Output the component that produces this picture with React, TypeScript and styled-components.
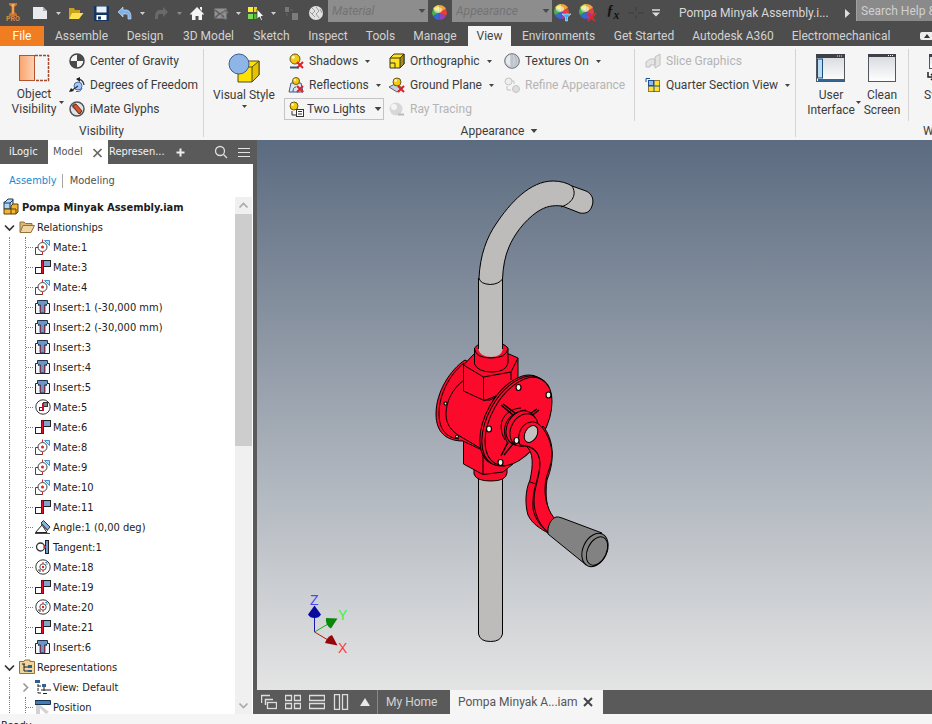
import React from "react";
import styled, { createGlobalStyle, css } from "styled-components";

const Global = createGlobalStyle`
  *, *::before, *::after { box-sizing: border-box; }
  html, body { margin: 0; background: #f5f5f5; }
  button, select, input { font: inherit; color: inherit; margin: 0; }
  ul { list-style: none; margin: 0; padding: 0; }
  svg { display: block; flex: none; }
`;

const uiFont = `Roboto, "Open Sans", sans-serif`;
const treeFont = `"DejaVu Sans Condensed", "DejaVu Sans", sans-serif`;

const Shell = styled.div`
  display: flex;
  flex-direction: column;
  height: 100vh;
  overflow: hidden;
  font: 12px/16px ${uiFont};
  color: #3c3c3c;
`;

const plain = css`
  background: none;
  border: 0;
  padding: 0;
  white-space: nowrap;
`;

/* ---------- quick access bar ---------- */

const QuickBar = styled.header`
  display: grid;
  flex: none;
  grid-template-columns:
    26px 28px 9px 26px 24px 24px 10px 28px 8px 28px 20px 14px 22px 12px 24px
    25px 100px 24px 100px 22px 28px 22px 24px 16px 176px 16px minmax(76px, 1fr);
  align-items: center;
  height: 26px;
  background: #4d4d4d;
  color: #d8d8d8;
`;

const QuickButton = styled.button`
  ${plain}
  display: flex;
  align-items: center;
  justify-content: center;
  height: 22px;
`;

const LogoBox = styled.div`
  display: flex;
  flex-direction: column;
  align-items: center;
  color: #e0893a;
  font: bold 7px/7px ${uiFont};
`;

const ComboBox = styled.span`
  display: grid;
  align-self: start;
  align-items: center;
  height: 22px;
  background: #8d8d8d;
  color: #737373;
  font-style: italic;
  > * { grid-area: 1 / 1; }
  > svg { justify-self: end; margin-right: 2px; pointer-events: none; }
`;

const ComboSelect = styled.select`
  ${plain}
  appearance: none;
  width: 100%;
  height: 100%;
  padding-left: 4px;
  opacity: 1;
`;

const WindowTitle = styled.div`
  padding-left: 15px;
  white-space: nowrap;
`;

const SearchInput = styled.input`
  align-self: start;
  width: 100%;
  height: 21px;
  border: 0;
  border-left: 1px solid #a0a0a0;
  padding: 0 0 0 4px;
  background: #8a8a8a;
  &::placeholder { color: #d0d0d0; opacity: 1; }
`;

/* ---------- ribbon ---------- */

const TabBar = styled.nav`
  display: flex;
  flex: none;
  height: 20px;
  background: #4d4d4d;
`;

const RibbonTab = styled.button<{ $w: number; $kind?: "file" | "active" }>`
  ${plain}
  display: flex;
  flex: none;
  align-items: center;
  justify-content: center;
  width: ${(p) => p.$w}px;
  color: ${(p) => (p.$kind === "file" ? "#fff" : p.$kind === "active" ? "#444" : "#d2d2d2")};
  background: ${(p) => (p.$kind === "file" ? "#f07d22" : p.$kind === "active" ? "#f5f5f5" : "none")};
`;

const CollapseButton = styled.button`
  ${plain}
  display: flex;
  align-items: center;
  justify-content: center;
  flex: none;
  align-self: center;
  width: 14px;
  height: 8px;
  margin-left: 22px;
  border-radius: 2px;
  background: #eee;
`;

const Ribbon = styled.section`
  display: flex;
  flex: none;
  height: 94px;
  padding-top: 3px;
  background: #f5f5f5;
  overflow: hidden;
`;

const Panel = styled.div<{ $w: number }>`
  display: flex;
  flex-direction: column;
  flex: none;
  width: ${(p) => p.$w}px;
  height: 88px;
  border-right: 1px solid #d4d4d4;
`;

const PanelBody = styled.div<{ $pad?: number }>`
  display: flex;
  flex: none;
  height: 72px;
  padding-left: ${(p) => p.$pad ?? 0}px;
`;

const PanelLabel = styled.button`
  ${plain}
  display: flex;
  flex: none;
  align-items: center;
  justify-content: center;
  gap: 6px;
  height: 20px;
`;

const ToolColumn = styled.div<{ $w: number; $lead?: number }>`
  display: flex;
  flex-direction: column;
  flex: none;
  width: ${(p) => p.$w}px;
  margin-left: ${(p) => p.$lead ?? 0}px;
`;

const Tool = styled.button`
  ${plain}
  display: flex;
  align-items: center;
  gap: 5px;
  height: 24px;
  &:disabled { color: #b4b4b4; }
`;

const ToolLabel = styled.span`
  margin-right: 2px;
`;

const LightCombo = styled.label`
  display: flex;
  align-items: center;
  gap: 2px;
  width: 100px;
  height: 22px;
  margin: 1px 0 0 -4px;
  padding: 0 1px 0 4px;
  border: 1px solid #c4c4c4;
`;

const LightSelect = styled.select`
  ${plain}
  appearance: none;
  flex: 1;
  min-width: 0;
`;

const BigTool = styled.button<{ $w: number }>`
  ${plain}
  display: flex;
  flex-direction: column;
  align-items: center;
  flex: none;
  width: ${(p) => p.$w}px;
  height: 72px;
  padding-top: 4px;
  line-height: 15px;
  > svg:first-child { margin-bottom: 5px; }
  > svg:last-child { margin-top: 2px; }
`;

const BigLabel = styled.span`
  white-space: pre;
`;

const SideCaret = styled.span`
  display: flex;
  align-items: flex-end;
  flex: none;
  width: 5px;
  height: 55px;
`;

const ColumnRule = styled.div<{ $lead?: number }>`
  flex: none;
  width: 1px;
  margin-left: ${(p) => p.$lead ?? 0}px;
  background: #d4d4d4;
`;

/* ---------- workspace ---------- */

const Workspace = styled.main`
  display: flex;
  flex: 1;
  min-height: 0;
`;

const Browser = styled.aside`
  display: flex;
  flex-direction: column;
  flex: none;
  width: 253px;
  background: #fff;
  font: 11px/16px ${treeFont};
  color: #1c1c1c;
`;

const BrowserTabs = styled.div`
  display: grid;
  flex: none;
  grid-template-columns: 48px 60px 60px 24px 36px 22px;
  height: 24px;
  background: #5a5a5a;
  color: #f2f2f2;
`;

const BrowserTab = styled.button<{ $active?: boolean; $pad?: number }>`
  ${plain}
  display: flex;
  align-items: center;
  justify-content: space-between;
  padding: 0 5px 0 ${(p) => p.$pad ?? 0}px;
  ${(p) => p.$active && "background: #fff; color: #555;"}
`;

const IconButton = styled.button<{ $right?: boolean }>`
  ${plain}
  display: flex;
  align-items: center;
  justify-content: ${(p) => (p.$right ? "flex-end" : "center")};
`;

const ModeRow = styled.div`
  display: flex;
  align-items: center;
  flex: none;
  height: 33px;
  padding-left: 9px;
`;

const Mode = styled.button<{ $active?: boolean }>`
  ${plain}
  color: ${(p) => (p.$active ? "#1a8ad4" : "#505050")};
  & + & {
    margin-left: 5px;
    padding-left: 7px;
    border-left: 1px solid #a8a8a8;
    line-height: 14px;
  }
`;

const TreeArea = styled.div`
  display: flex;
  flex: 1;
  min-height: 0;
  overflow: hidden;
`;

const Tree = styled.ul`
  flex: 1;
`;

const TreeRow = styled.li<{ $bold?: boolean }>`
  display: flex;
  align-items: center;
  height: 20px;
  padding-left: ${(p) => (p.$bold ? 3 : 0)}px;
  white-space: nowrap;
  font-weight: ${(p) => (p.$bold ? "bold" : "normal")};
  > svg { margin-right: 2px; }
`;

const TreeText = styled.span`
  padding-top: 2px;
`;

const Guide = styled.span<{ $wide?: boolean }>`
  display: flex;
  align-items: center;
  flex: none;
  width: ${(p) => (p.$wide ? 9 : 10)}px;
  height: 20px;
  margin-left: ${(p) => (p.$wide ? 9 : 7)}px;
  border-left: 1px dotted #808080;
`;

const Branch = styled.span`
  width: 7px;
  height: 1px;
  border-top: 1px dotted #808080;
`;

const Twisty = styled.button<{ $nested?: boolean }>`
  ${plain}
  display: flex;
  align-items: center;
  flex: none;
  width: ${(p) => (p.$nested ? 17 : 19)}px;
  height: 20px;
  padding-left: ${(p) => (p.$nested ? 2 : 4)}px;
`;

const ScrollTrack = styled.div`
  display: grid;
  grid-template-rows: 17px 232px 1fr 17px;
  width: 17px;
  margin-right: 1px;
  background: #f0f0f0;
  justify-items: center;
  align-items: center;
`;

const ScrollThumb = styled.div`
  width: 100%;
  height: 100%;
  background: #cdcdcd;
`;

const DocArea = styled.section`
  display: flex;
  flex-direction: column;
  flex: 1;
  min-width: 0;
  background: #5a5a5a;
`;

const Canvas = styled.div`
  flex: 1;
  min-height: 0;
  margin-left: 4px;
  background: linear-gradient(#5b6b80, #e4e4e4);
  > svg { width: 100%; height: 100%; }
`;

const DocTabs = styled.div`
  display: flex;
  flex: none;
  height: 24px;
  padding-left: 4px;
  color: #d4d4d4;
`;

const LayoutButtons = styled.div`
  display: flex;
  align-items: center;
  gap: 8px;
  width: 121px;
  padding-left: 4px;
  border-right: 1px solid #888;
`;

const DocTab = styled.button<{ $w: number; $active?: boolean }>`
  ${plain}
  display: flex;
  align-items: center;
  justify-content: space-between;
  width: ${(p) => p.$w}px;
  padding: 0 10px 0 8px;
  ${(p) => p.$active && "background: #f5f5f5; color: #555;"}
`;

const StatusBar = styled.footer`
  flex: none;
  height: 10px;
  padding: 5px 0 0 1px;
  overflow: hidden;
  background: #f5f5f5;
  font: 11px/14px ${treeFont};
  color: #222;
`;

/* ---------- icons ---------- */

const Caret = ({ size = 5, color = "#444" }: { size?: number; color?: string }) => (
  <svg width={size} height={Math.ceil(size / 2)} viewBox="0 0 10 6">
    <path d="M0 0H10L5 6Z" fill={color} />
  </svg>
);

type DrawProps = { w?: number; h?: number; children: React.ReactNode };
const Draw = ({ w = 16, h = 16, children }: DrawProps) => (
  <svg width={w} height={h} viewBox={`0 0 ${w} ${h}`} fill="none">{children}</svg>
);

const Logo = () => (
  <Draw w={10} h={13}>
    <path d="M1 0H9V2L6.5 4V9L9 11V13H1V11L3.5 9V4L1 2Z" fill="#c9722a" />
    <path d="M3 1H7L5.8 4V10L5 12L4.2 10V4Z" fill="#f3ab62" />
  </Draw>
);
const NewIcon = () => (
  <Draw w={16} h={12}><path d="M1 0H11L15 4V12H1Z" fill="#e9eaee" /><path d="M11 0V4H15Z" fill="#aab" /></Draw>
);
const OpenIcon = () => (
  <Draw w={16} h={13}>
    <path d="M1 1H6L7 3H12V6H5L1 12Z" fill="#c9a11c" />
    <path d="M4 6H15.5L11 12H1Z" fill="#ffe14d" />
  </Draw>
);
const SaveIcon = () => (
  <Draw w={15} h={15}>
    <rect width="15" height="15" fill="#17365f" />
    <rect x="2.5" y="0.5" width="10" height="6" fill="#e8f0fa" />
    <rect x="2.5" y="9" width="10" height="5" fill="#fff" /><rect x="4" y="10.5" width="3" height="3" fill="#17365f" />
  </Draw>
);
const UndoIcon = ({ faded }: { faded?: boolean }) => (
  <svg width="14" height="13" viewBox="0 0 14 13">
    <g transform={faded ? "matrix(-1 0 0 1 14 0)" : undefined}>
      <path d="M0 5L5 0V3H9Q13.500 4 13 12H10Q10.500 7.500 8.500 7H5V10Z" fill={faded ? "#6a6a6a" : "#7fb1e8"} stroke={faded ? "none" : "#d6e8fb"} strokeWidth="0.600" />
    </g>
  </svg>
);
const HomeIcon = () => (
  <Draw w={14} h={15}>
    <path d="M7 1L14 8L13 9L12 8V14H8.500V10H5.500V14H2V8L1 9L0 8Z" fill="#f4f4f4" />
    <path d="M10 1H12V5L10 3Z" fill="#f4f4f4" />
  </Draw>
);
const PictureIcon = () => (
  <Draw w={15} h={13}>
    <rect x="0.500" y="1.500" width="12" height="10" fill="#929292" />
    <path d="M1 3L6 7L12 3M1 11L5 7M10 10L8 8" stroke="#5a5a5a" strokeWidth="1.500" />
    <path d="M14 6A3.500 3.500 0 1 0 13 11" stroke="#777" strokeWidth="1.500" />
  </Draw>
);
const SelectIcon = () => (
  <Draw w={16} h={15}>
    <rect x="0" y="1" width="5" height="5" fill="#ffe93b" /><rect x="6" y="1" width="3" height="5" fill="#e8d22b" />
    <rect x="0" y="8" width="5" height="5" fill="#7ed957" /><rect x="6" y="8" width="4" height="5" fill="#55b63c" />
    <path d="M9 3V13L11.500 11L13 14.500L14.500 14L13 10.500H16Z" fill="#fff" stroke="#333" strokeWidth="0.700" />
  </Draw>
);
const FadedNodes = () => (
  <Draw w={15} h={15}>
    <rect x="1" y="1" width="4" height="5" fill="#777" /><rect x="8" y="7" width="6" height="7" fill="#7c7c7c" />
    <path d="M6 4H9M3 7V10" stroke="#666" />
  </Draw>
);
const TextureBall = () => (
  <Draw>
    <circle cx="8" cy="8" r="7" fill="#e2e2e2" />
    <path d="M4 3L7 6L4 9L7 12M8 2L11 6L8 9L11 13M12 4L14 8M2 7L4 9" stroke="#9b9b9b" />
  </Draw>
);
const Wheel = ({ mark }: { mark?: "filter" | "clear" }) => (
  <Draw w={18} h={18}>
    <g transform={mark ? "translate(0 0)" : "translate(1 1)"}>
      <path d="M7.500 7.500V0A7.500 7.500 0 0 1 14 4Z" fill="#f5a13a" />
      <path d="M7.500 7.500L14 4A7.500 7.500 0 0 1 14 11Z" fill="#e5413a" />
      <path d="M7.500 7.500L14 11A7.500 7.500 0 0 1 7.500 15Z" fill="#9a3fb5" />
      <path d="M7.500 7.500V15A7.500 7.500 0 0 1 1 11Z" fill="#3568d4" />
      <path d="M7.500 7.500L1 11A7.500 7.500 0 0 1 1 4Z" fill="#49b04c" />
      <path d="M7.500 7.500L1 4A7.500 7.500 0 0 1 7.500 0Z" fill="#e6dc3f" />
      <ellipse cx="6" cy="5" rx="4" ry="3" fill="#fff" opacity="0.550" />
    </g>
    {mark === "filter" && <path d="M8 10H17L13.500 13V17H11.500V13Z" fill="#39b3ef" stroke="#fff" strokeWidth="0.500" />}
    {mark === "clear" && <path d="M9 10L16 17M17 9L9 17" stroke="#d92b2b" strokeWidth="2" />}
  </Draw>
);
const Fx = styled.span`
  font: italic bold 14px/16px "Liberation Serif", serif;
  color: #111;
`;
const ToolbarMenu = () => (
  <Draw w={10} h={8}><path d="M1 1H9" stroke="#ddd" strokeWidth="1.500" /><path d="M1 3.500H9L5 7.500Z" fill="#ddd" /></Draw>
);

const ObjectVisibilityIcon = () => (
  <Draw w={32} h={29}>
    <defs><linearGradient id="ov"><stop stopColor="#f9a36d" /><stop offset="1" stopColor="#fdd2b4" /></linearGradient></defs>
    <rect x="1.500" y="2.500" width="15" height="25" fill="url(#ov)" stroke="#b2552f" />
    <path d="M17 2.500H30.500V27.500H17" stroke="#a04a30" strokeWidth="1.500" strokeDasharray="3 1" />
  </Draw>
);
const GravityIcon = () => (
  <Draw><circle cx="8" cy="8" r="7" fill="#f6f6f6" stroke="#444" strokeWidth="1.500" /><path d="M8 8H1A7 7 0 0 0 8 15ZM8 8V1A7 7 0 0 1 15 8Z" fill="#4a4a4a" /></Draw>
);
const FreedomIcon = () => (
  <Draw>
    <circle cx="9" cy="9" r="4" fill="#a9c6f2" stroke="#4470b4" />
    <path d="M9 9L2 14M8 2Q14 2 15 8" stroke="#333" strokeWidth="1.300" />
    <path d="M0 15L2 11L5 14ZM7 2L11 0V5Z" fill="#222" />
    <path d="M13 11Q12 15 7 14.500" stroke="#3d66ad" />
  </Draw>
);
const GlyphIcon = () => (
  <Draw>
    <circle cx="8" cy="8" r="7" fill="#dfe3ea" stroke="#555" strokeWidth="1.500" />
    <path d="M3 3L6 2L13 10L12 13L10 13L3 6Z" fill="#6d7684" />
    <path d="M4 5L7 3L13 10L10 13Z" fill="#d4562a" stroke="#7c2d12" />
  </Draw>
);
const VisualStyleIcon = () => (
  <Draw w={32} h={30}>
    <path d="M10 14L16 8H31V22L24 29H10Z" fill="#ffe100" stroke="#4f4a18" />
    <path d="M24 14L31 8V22L24 29Z" fill="#e5c200" stroke="#4f4a18" />
    <path d="M10 14H24" stroke="#4f4a18" />
    <circle cx="11" cy="11" r="10" fill="#8fb4e6" stroke="#3a5c94" />
  </Draw>
);
const Cross = ({ x, y }: { x: number; y: number }) => (
  <path d={`M${x} ${y}l6 6m0 -6l-6 6`} stroke="#d8232a" strokeWidth="2" />
);
const Bulb = ({ cx, cy, r }: { cx: number; cy: number; r: number }) => (
  <><circle cx={cx} cy={cy} r={r} fill="#f4c911" stroke="#6a5b14" /><circle cx={cx - r / 3} cy={cy - r / 3} r={r / 3} fill="#fff6b0" /></>
);
const ShadowsIcon = () => <Draw><path d="M2 14.500H11" stroke="#31507e" strokeWidth="2" /><Bulb cx={7} cy={6} r={5} /><Cross x={9} y={9} /></Draw>;
const ReflectionsIcon = () => <Draw><path d="M3 6H13L15 15H1Z" fill="#dce6f2" stroke="#3b5b86" /><Bulb cx={8} cy={4} r={3.5} /><path d="M5 15Q5 10 8 10" stroke="#3b5b86" /><Cross x={9} y={9} /></Draw>;
const LightsIcon = () => (
  <Draw>
    <Bulb cx={5} cy={5} r={4} />
    <path d="M3 10V14H7" stroke="#333" /><rect x="7.500" y="8.500" width="7" height="7" fill="#fff" stroke="#333" /><path d="M9 10.500H13M9 13H13" stroke="#333" />
  </Draw>
);
const OrthoIcon = () => (
  <Draw><path d="M1 5L5 1H15V11L11 15H1Z" fill="#ffe21a" stroke="#333" /><path d="M11 5L15 1V11L11 15Z" fill="#a58d13" stroke="#333" /><path d="M1 5H11M1 10H6V15" stroke="#333" /></Draw>
);
const GroundIcon = () => <Draw><path d="M0 10L6 7L14 11L8 15Z" fill="#c8d0da" stroke="#56606c" /><Bulb cx={8} cy={5} r={4} /><Cross x={9} y={9} /></Draw>;
const RayIcon = () => <Draw><circle cx="7" cy="8" r="6.500" fill="#d7d7d7" /><circle cx="5" cy="6" r="3" fill="#f4f4f4" /><path d="M9 13.500H15" stroke="#bbb" strokeWidth="2" /></Draw>;
const TexturesIcon = () => <Draw><circle cx="8" cy="8" r="7.300" fill="#c9cdd4" stroke="#6b6f76" /><path d="M8 1V15M11 2Q14 8 11 14" stroke="#b4b9c0" /><path d="M6 2Q1 4 2 10L6 13Z" fill="#e6e9ed" /></Draw>;
const RefineIcon = () => <Draw><circle cx="4.500" cy="4.500" r="3.500" fill="#eee" stroke="#c4c4c4" /><circle cx="12" cy="12" r="3.500" fill="#ddd" stroke="#c4c4c4" /><path d="M3 9V13H7M8 4H10V7" stroke="#c4c4c4" /></Draw>;
const SliceIcon = () => <Draw><path d="M1 9L5 6H10V12H5V14H1ZM10 4L15 1V12L10 15Z" fill="#e4e4e4" stroke="#c0c0c0" /></Draw>;
const QuarterIcon = () => (
  <Draw><rect x="3.500" y="3.500" width="11" height="11" fill="#ffdf33" stroke="#8f7c1d" /><rect x="3.500" y="3.500" width="5" height="5" fill="#8db9f0" stroke="#1f4f93" /><path d="M9 3V15M3 9H15M1 5V1.500H5" stroke="#1f4f93" /></Draw>
);
const UserInterfaceIcon = () => (
  <Draw w={32} h={30}>
    <defs><linearGradient id="ui" x2="0" y2="1"><stop stopColor="#d5d8de" /><stop offset="1" stopColor="#fff" /></linearGradient></defs>
    <rect x="1.500" y="1.500" width="28" height="27" fill="url(#ui)" stroke="#53575f" /><path d="M1 3H30" stroke="#3d4047" strokeWidth="4" />
    <rect x="2.500" y="6" width="5" height="19" fill="#b9dcf7" stroke="#1d4d7d" /><path d="M3 27H29" stroke="#32658f" strokeWidth="2" />
    <path d="M22 3H28" stroke="#eee" strokeDasharray="1 1" />
  </Draw>
);
const CleanScreenIcon = () => (
  <Draw w={30} h={30}>
    <rect x="1.500" y="1.500" width="27" height="27" fill="url(#ui)" stroke="#53575f" /><path d="M1 2.500H29" stroke="#3d4047" strokeWidth="3" /><path d="M21 2.500H27" stroke="#eee" strokeDasharray="1 1" />
  </Draw>
);
const SwitchIcon = () => (
  <Draw w={34} h={30}><rect x="4.500" y="1.500" width="24" height="14" fill="url(#ui)" stroke="#53575f" /><path d="M4 2.500H29" stroke="#3d4047" strokeWidth="3" /><path d="M3 19V24H9M6 21L9 24L6 27" stroke="#222" strokeWidth="1.500" /></Draw>
);

/* tree glyphs */
const AssemblyIcon = () => (
  <Draw w={17} h={18}>
    <path d="M2 4L5 1H10V9L8 11H1V4Z" fill="#b7d5ef" stroke="#18395b" /><path d="M1 5H7V11M7 5L10 2" stroke="#18395b" />
    <path d="M1 11H8V8L10 6H15V14L13 16H1Z" fill="#f2b632" stroke="#5b400c" /><path d="M8 11H13V16M8 11V16" stroke="#5b400c" />
  </Draw>
);
const FolderIcon = () => (
  <Draw><path d="M1 13V3H5L6.500 4.500H13V7" fill="#d9b878" stroke="#92713a" /><path d="M4 6.500H15.500L12 13.500H1Z" fill="#f0d59f" stroke="#92713a" /></Draw>
);
const AxisMate = () => (
  <Draw>
    <path d="M9.500 1.500H14.500V6.500L12 4Z" fill="#bfe0f4" stroke="#3f8fc8" /><path d="M4 8.500H0.500V15.500H7.500V13" stroke="#444" />
    <circle cx="7.500" cy="8" r="4.500" fill="#fff" stroke="#444" /><circle cx="7.500" cy="8" r="1.500" fill="#d22" /><path d="M7.500 0.500V3M7.500 13V15.500" stroke="#d22" />
  </Draw>
);
const FaceMate = () => (
  <Draw>
    <rect x="8.500" y="1.500" width="7" height="6" fill="#7ea6d2" stroke="#222" /><rect x="0.500" y="8.500" width="6" height="6" fill="#fff" stroke="#222" />
    <rect x="6.500" y="1.500" width="2" height="13" fill="#e0142c" stroke="#7d0a18" />
  </Draw>
);
const InsertGlyph = () => (
  <Draw>
    <path d="M0.500 4.500H14.500V14.500H0.500Z" fill="#f4f7fb" stroke="#222" />
    <path d="M2.500 4V1.500H12.500V4.500L11 6H9.500V14H5.500V6H4L2.500 4.500Z" fill="#6b97c8" stroke="#23344c" />
    <path d="M3 6.500H5V13.500M12 6.500H10V13.500" stroke="#d3304a" />
  </Draw>
);
const RoundFace = () => (
  <Draw><circle cx="8" cy="8" r="7.200" fill="#fff" stroke="#333" /><rect x="8.500" y="3.500" width="4" height="4" fill="#7c8796" stroke="#333" /><rect x="4.500" y="8.500" width="4" height="3" stroke="#333" /><path d="M8 4V12" stroke="#c8102e" strokeWidth="2" /></Draw>
);
const RoundAxis = () => (
  <Draw><circle cx="8" cy="8" r="7.200" fill="#fff" stroke="#333" /><circle cx="8" cy="8" r="3.200" stroke="#555" /><circle cx="8" cy="8" r="1.200" fill="#d22" /><path d="M10 3.500H12V6" stroke="#3f9bd6" /><path d="M4 10V12H6" stroke="#444" /><path d="M8 3V5M8 11V13" stroke="#d22" /></Draw>
);
const AngleGlyph = () => (
  <Draw><path d="M0.500 13.500L7 6L12 13.500Z" fill="#fff" stroke="#222" /><path d="M6 4L8.500 1.500L15 8L12.500 11Z" fill="#86aee0" stroke="#333" /><path d="M6 5L13 12" stroke="#d3304a" /><path d="M0 14.500H15" stroke="#c8102e" /></Draw>
);
const TangentGlyph = () => (
  <Draw><circle cx="5.500" cy="8" r="4" fill="#fff" stroke="#333" strokeWidth="1.300" /><rect x="10.500" y="1.500" width="3" height="13" fill="#6f9bd0" stroke="#222" /><path d="M8.500 8H11" stroke="#e01f2f" strokeWidth="2" /></Draw>
);
const RepsIcon = () => (
  <Draw><path d="M0.500 14.500V2.500H5L6 1H11V2.500H15.500V14.500Z" fill="#f0d59f" stroke="#92713a" /><path d="M3 5H6M5 5V12H9M5 8H9" stroke="#222" /><rect x="9" y="6" width="4" height="3" fill="#31608f" /><rect x="9" y="11" width="4" height="2" fill="#31608f" /></Draw>
);
const ViewGlyph = () => (
  <Draw><rect x="0" y="1" width="5" height="3" fill="#2f5e95" /><path d="M3 5V14M3 7H7M3 14H7" stroke="#222" strokeDasharray="3 1" /><rect x="7" y="5" width="4" height="3" fill="#31608f" /><path d="M9 8V12M6 11H16M8 14.500H12" stroke="#222" /></Draw>
);
const PositionGlyph = () => (
  <Draw><path d="M1 5H5V15H1ZM5 6L14 13L11 15L5 9Z" fill="#d2d2d2" /><path d="M0 1.500H15.500V5.500H0Z" fill="#3f7cb8" stroke="#17304d" /></Draw>
);
const Chevron = ({ d, color = "#333" }: { d: string; color?: string }) => (
  <Draw w={11} h={11}><path d={d} stroke={color} strokeWidth="1.700" /></Draw>
);

const StackIcon = () => <Draw><path d="M0.500 9V1.500H9M4.500 11V5.500H12" stroke="#ddd" strokeWidth="1.500" /><rect x="6.500" y="8.500" width="9" height="6" stroke="#ddd" strokeWidth="1.300" /></Draw>;
const GridIcon = () => <Draw><path d="M0.500 1.500H6.500V6.500H0.500ZM9.500 1.500H15.500V6.500H9.500ZM0.500 9.500H6.500V14.500H0.500ZM9.500 9.500H15.500V14.500H9.500Z" stroke="#ddd" strokeWidth="1.300" /></Draw>;
const RowsIcon = () => <Draw><path d="M0.500 1.500H15.500V6.500H0.500ZM0.500 9.500H15.500V14.500H0.500Z" stroke="#ddd" strokeWidth="1.300" /></Draw>;
const ColsIcon = () => <Draw><path d="M1.500 0.500H6.500V15.500H1.500ZM9.500 0.500H14.500V15.500H9.500Z" stroke="#ddd" strokeWidth="1.300" /></Draw>;

/* ---------- model ---------- */

const RED = "#fb0a2c";
const PIPE = "#bdbcba";

const Axis = styled.text`
  font: 14px "Liberation Sans", sans-serif;
`;

const PumpModel = () => (
  <svg viewBox="257 140 675 550" role="img" aria-label="Rotary hand pump">
    <g stroke="#000" strokeWidth="1" strokeLinejoin="round" fill="none">
      <path d="M478.500 470V634Q480 641.500 490.500 641.500T502.500 634V470Z" fill={PIPE} />
      <path d="M474 466V474Q476 481 491 481T507 473V462Z" fill={RED} />
      <path d="M463.500 435V464L483 474.500L503 472L513 464V440Z" fill={RED} />
      <path d="M483 450V474" />
      <path d="M465 360C450 370 436 392 436 414C436 432 446 441 463 441L482 450L500 380Z" fill={RED} />
      <path d="M464 363C450 374 439 394 439 414C439 430 447 438 459 439" />
      <path d="M464 380C452 389 446 402 446 414C446 425 452 432 463 438L480 448" />
      <path d="M463.500 365L474 354H509L518 358V385L490 400H483L463.500 391Z" fill={RED} />
      <path d="M463.500 365L483.500 377L511 372L518 358M483.500 377V401L498 395M511 372V380" />
      <path d="M474.500 348V364Q478 372 492 372T508 363V348Q503 342 491 342T474.500 348Z" fill={RED} />
      <path d="M474.500 349Q476 358 491 358T508 349" />
      <path d="M478.500 278V350Q481 357 491 357T502.500 350V278Z" fill={PIPE} stroke="none" />
      <path d="M478.500 278V349M502.500 278V349" />
      <path d="M479 278C480 255 487 237 496 224C510 203 530 181 553 181C561 181 567 183 572 186L586 191C593 194 594 201 592 206C590 212 586 214 580 213L562 206C553 205 546 206 537 212C524 221 514 235 509 247C505 256 503 267 502.500 279Q499 284 490.500 284.500Q480 284 479 278Z" fill={PIPE} />
      <path d="M572 186C577 194 573 203 561 207" />

      <ellipse cx="514" cy="420" rx="49" ry="28" transform="rotate(-61 514 420)" fill={RED} />
      <ellipse cx="516" cy="421" rx="49" ry="28" transform="rotate(-61 516 421)" fill={RED} />
      <ellipse cx="518.500" cy="421.500" rx="48" ry="27.500" transform="rotate(-61 518.500 421.500)" fill={RED} />
      <path d="M501 405L513 415M503 404L515 413M539 410L530 417M537 409L528 415M501 456L508 442M504 455L513 444" strokeWidth="1.500" />
      <path d="M505 440C495 422 506 409 521 408M508 444C499 427 508 412 526 410" />
      <ellipse cx="521" cy="428" rx="18" ry="14" transform="rotate(-61 521 428)" fill={RED} />
      <ellipse cx="524" cy="430" rx="17" ry="13" transform="rotate(-61 524 430)" fill={RED} />

      <path d="M526 446C534 452 533 466 530 480C525 491 525 505 528 515C532 524 541 529 548 533L554 520C546 508 545 495 547 480C555 460 554 440 543 426Z" fill={RED} />
      <path d="M521 446C532 445 541 453 540 466C538 481 532 489 533 509C535 519 541 527 548 532M530 482L536 484" />
      <path d="M520 445C516 436 521 423 531 422C540 420 551 437 552 453C552 468 545 474 545 489C545 502 549 512 555 519L549 533C540 526 534 514 534 501C534 487 540 477 540 463C539 450 533 446 520 445Z" fill={RED} />
      <ellipse cx="531" cy="434" rx="9" ry="6" transform="rotate(-61 531 434)" fill="#c3c2be" />

      <g fill="#f0f0e4" strokeWidth="1.200">
        <ellipse cx="518.500" cy="387.500" rx="2.500" ry="3" /><ellipse cx="548.500" cy="395" rx="2.500" ry="3" />
        <ellipse cx="489" cy="429" rx="2.500" ry="3" /><ellipse cx="516.500" cy="440.500" rx="2.500" ry="3" />
        <ellipse cx="500.500" cy="462.500" rx="2.500" ry="3" /><circle cx="445.500" cy="403.500" r="1.500" /><circle cx="457" cy="436.500" r="1.500" />
      </g>

      <path d="M548 534C547 526 551 519 556 517Q558 516.500 562 518L602 533L585 564Z" fill="#828282" />
      <ellipse cx="595" cy="550" rx="17.500" ry="12" transform="rotate(-65 595 550)" fill="#828282" />
      <ellipse cx="597" cy="551" rx="15" ry="9.500" transform="rotate(-65 597 551)" fill="#828282" />
    </g>

    <path d="M314.500 632V612" stroke="#1818b0" /><path d="M314.500 632L328 624" stroke="#18b018" /><path d="M314.500 632L328 640" stroke="#b01818" />
    <path d="M308 614.500L314.500 605.500L321 614.500Q319 618 314.500 618T308 614.500Z" fill="#0a0a9c" />
    <path d="M326 618L337.500 618.500L331 628.500Q325 625 326 618Z" fill="#0a870a" />
    <path d="M332 635L337.500 645.500L325 643Q327 637 332 635Z" fill="#960808" />
    <Axis x="310" y="605" fill="#4848f4">Z</Axis>
    <Axis x="338" y="620" fill="#3cf03c">Y</Axis>
    <Axis x="338" y="653" fill="#fa3c3c">X</Axis>
  </svg>
);

/* ---------- data ---------- */

const tabs: [string, number, ("file" | "active")?][] = [
  ["File", 44, "file"], ["Assemble", 75], ["Design", 52], ["3D Model", 75], ["Sketch", 51],
  ["Inspect", 62], ["Tools", 43], ["Manage", 66], ["View", 43, "active"], ["Environments", 95],
  ["Get Started", 76], ["Autodesk A360", 102], ["Electromechanical", 114],
];

const relationships: [string, React.ComponentType][] = [
  ["Mate:1", AxisMate], ["Mate:3", FaceMate], ["Mate:4", AxisMate],
  ["Insert:1 (-30,000 mm)", InsertGlyph], ["Insert:2 (-30,000 mm)", InsertGlyph],
  ["Insert:3", InsertGlyph], ["Insert:4", InsertGlyph], ["Insert:5", InsertGlyph],
  ["Mate:5", RoundFace], ["Mate:6", FaceMate], ["Mate:8", AxisMate], ["Mate:9", AxisMate],
  ["Mate:10", AxisMate], ["Mate:11", FaceMate], ["Angle:1 (0,00 deg)", AngleGlyph],
  ["Tangent:1", TangentGlyph], ["Mate:18", RoundAxis], ["Mate:19", FaceMate],
  ["Mate:20", RoundAxis], ["Mate:21", FaceMate], ["Insert:6", InsertGlyph],
];

const DownCaret = ({ name }: { name: string }) => (
  <QuickButton aria-label={name}><Caret color="#cfcfcf" /></QuickButton>
);

const Combo = ({ name }: { name: string }) => (
  <ComboBox>
    <ComboSelect aria-label={name} defaultValue={name}><option>{name}</option></ComboSelect>
    <Caret size={8} color="#4a4a4a" />
  </ComboBox>
);

type ToolItemProps = { icon: React.ReactNode; label: string; menu?: boolean; disabled?: boolean };
const ToolItem = ({ icon, label, menu, disabled }: ToolItemProps) => (
  <Tool disabled={disabled}>
    {icon}
    <ToolLabel>{label}</ToolLabel>
    {menu && <Caret />}
  </Tool>
);

export default function App() {
  return (
    <Shell>
      <Global />
      <QuickBar>
        <LogoBox><Logo /><span>PRO</span></LogoBox>
        <QuickButton aria-label="New"><NewIcon /></QuickButton>
        <DownCaret name="New options" />
        <QuickButton aria-label="Open"><OpenIcon /></QuickButton>
        <QuickButton aria-label="Save"><SaveIcon /></QuickButton>
        <QuickButton aria-label="Undo"><UndoIcon /></QuickButton>
        <DownCaret name="Undo list" />
        <QuickButton aria-label="Redo"><UndoIcon faded /></QuickButton>
        <QuickButton aria-label="Redo list"><Caret color="#8a8a8a" /></QuickButton>
        <QuickButton aria-label="Home"><HomeIcon /></QuickButton>
        <QuickButton aria-label="Update"><PictureIcon /></QuickButton>
        <DownCaret name="Update options" />
        <QuickButton aria-label="Select"><SelectIcon /></QuickButton>
        <DownCaret name="Select options" />
        <QuickButton aria-label="Component"><FadedNodes /></QuickButton>
        <QuickButton aria-label="Materials"><TextureBall /></QuickButton>
        <Combo name="Material" />
        <QuickButton aria-label="Appearances"><Wheel /></QuickButton>
        <Combo name="Appearance" />
        <QuickButton aria-label="Adjust"><Wheel mark="filter" /></QuickButton>
        <QuickButton aria-label="Clear"><Wheel mark="clear" /></QuickButton>
        <QuickButton aria-label="Parameters"><Fx>ƒ<sub>x</sub></Fx></QuickButton>
        <QuickButton aria-label="Measure"><Draw><path d="M0 8H6M10 8H16M8 2V6M8 10V14" stroke="#3c3c3c" /></Draw></QuickButton>
        <QuickButton aria-label="Customize"><ToolbarMenu /></QuickButton>
        <WindowTitle>Pompa Minyak Assembly.i...</WindowTitle>
        <QuickButton aria-label="Expand search"><Draw w={6} h={9}><path d="M0 0L5 4.500L0 9Z" fill="#ddd" /></Draw></QuickButton>
        <SearchInput aria-label="Search Help" placeholder="Search Help &amp; Commands..." />
      </QuickBar>

      <TabBar>
        {tabs.map(([name, w, kind]) => <RibbonTab key={name} $w={w} $kind={kind}>{name}</RibbonTab>)}
        <CollapseButton aria-label="Collapse ribbon"><svg width="6" height="4" viewBox="0 0 6 4"><path d="M0 4L3 0L6 4Z" fill="#333" /></svg></CollapseButton>
      </TabBar>

      <Ribbon>
        <Panel $w={204}>
          <PanelBody $pad={9}>
            <BigTool $w={50}><ObjectVisibilityIcon /><BigLabel>{"Object\nVisibility"}</BigLabel></BigTool>
            <SideCaret><Caret /></SideCaret>
            <ToolColumn $w={135} $lead={5}>
              <ToolItem icon={<GravityIcon />} label="Center of Gravity" />
              <ToolItem icon={<FreedomIcon />} label="Degrees of Freedom" />
              <ToolItem icon={<GlyphIcon />} label="iMate Glyphs" />
            </ToolColumn>
          </PanelBody>
          <PanelLabel>Visibility</PanelLabel>
        </Panel>
        <Panel $w={592}>
          <PanelBody>
            <BigTool $w={80}><VisualStyleIcon /><BigLabel>Visual Style</BigLabel><Caret /></BigTool>
            <ToolColumn $w={101} $lead={4}>
              <ToolItem icon={<ShadowsIcon />} label="Shadows" menu />
              <ToolItem icon={<ReflectionsIcon />} label="Reflections" menu />
              <LightCombo>
                <LightsIcon />
                <LightSelect aria-label="Lighting" defaultValue="Two Lights"><option>Two Lights</option></LightSelect>
                <Caret size={8} />
              </LightCombo>
            </ToolColumn>
            <ToolColumn $w={115}>
              <ToolItem icon={<OrthoIcon />} label="Orthographic" menu />
              <ToolItem icon={<GroundIcon />} label="Ground Plane" menu />
              <ToolItem icon={<RayIcon />} label="Ray Tracing" disabled />
            </ToolColumn>
            <ToolColumn $w={130}>
              <ToolItem icon={<TexturesIcon />} label="Textures On" menu />
              <ToolItem icon={<RefineIcon />} label="Refine Appearance" disabled />
            </ToolColumn>
            <ColumnRule />
            <ToolColumn $w={145} $lead={10}>
              <ToolItem icon={<SliceIcon />} label="Slice Graphics" disabled />
              <ToolItem icon={<QuarterIcon />} label="Quarter Section View" menu />
            </ToolColumn>
          </PanelBody>
          <PanelLabel>Appearance <Caret size={8} /></PanelLabel>
        </Panel>
        <Panel $w={304}>
          <PanelBody $pad={10}>
            <BigTool $w={50}><UserInterfaceIcon /><BigLabel>{"User\nInterface"}</BigLabel></BigTool>
            <SideCaret><Caret /></SideCaret>
            <BigTool $w={42}><CleanScreenIcon /><BigLabel>{"Clean\nScreen"}</BigLabel></BigTool>
            <ColumnRule $lead={5} />
            <BigTool $w={66}><SwitchIcon /><BigLabel>Switch</BigLabel></BigTool>
          </PanelBody>
          <PanelLabel>Windows</PanelLabel>
        </Panel>
      </Ribbon>

      <Workspace>
        <Browser>
          <BrowserTabs>
            <BrowserTab $pad={9}>iLogic</BrowserTab>
            <BrowserTab $active $pad={5}>Model<Chevron d="M1.500 2L9.500 10M9.500 2L1.500 10" color="#666" /></BrowserTab>
            <BrowserTab $pad={1}>Represen...</BrowserTab>
            <IconButton aria-label="Add tab"><Draw w={9} h={9}><path d="M4.500 0.500V8.500M0.500 4.500H8.500" stroke="#eee" strokeWidth="2" /></Draw></IconButton>
            <IconButton aria-label="Search" $right><Draw w={14} h={14}><circle cx="6" cy="6" r="4.500" stroke="#ddd" strokeWidth="1.300" /><path d="M9.500 9.500L13 13" stroke="#ddd" strokeWidth="1.300" /></Draw></IconButton>
            <IconButton aria-label="Menu" $right><Draw w={12} h={10}><path d="M0 1.500H12M0 5.500H12M0 9.500H12" stroke="#e4e4e4" /></Draw></IconButton>
          </BrowserTabs>
          <ModeRow><Mode $active>Assembly</Mode><Mode>Modeling</Mode></ModeRow>
          <TreeArea>
            <Tree>
              <TreeRow $bold><AssemblyIcon /><TreeText>Pompa Minyak Assembly.iam</TreeText></TreeRow>
              <TreeRow><Twisty aria-label="Collapse"><Chevron d="M1 3.500L5.500 8L10 3.500" /></Twisty><FolderIcon /><TreeText>Relationships</TreeText></TreeRow>
              {relationships.map(([name, Icon]) => (
                <TreeRow key={name}><Guide $wide /><Guide><Branch /></Guide><Icon /><TreeText>{name}</TreeText></TreeRow>
              ))}
              <TreeRow><Twisty aria-label="Collapse"><Chevron d="M1 3.500L5.500 8L10 3.500" /></Twisty><RepsIcon /><TreeText>Representations</TreeText></TreeRow>
              <TreeRow><Guide $wide /><Twisty $nested aria-label="Expand"><Chevron d="M3.500 1.500L7.500 5.500L3.500 9.500" color="#999" /></Twisty><ViewGlyph /><TreeText>View: Default</TreeText></TreeRow>
              <TreeRow><Guide $wide /><Guide><Branch /></Guide><PositionGlyph /><TreeText>Position</TreeText></TreeRow>
            </Tree>
            <ScrollTrack>
              <Chevron d="M1.500 7.500L5.500 3.500L9.500 7.500" color="#aaa" />
              <ScrollThumb />
              <span />
              <Chevron d="M1.500 3.500L5.500 7.500L9.500 3.500" color="#aaa" />
            </ScrollTrack>
          </TreeArea>
        </Browser>
        <DocArea>
          <Canvas><PumpModel /></Canvas>
          <DocTabs>
            <LayoutButtons>
              <IconButton aria-label="Cascade"><StackIcon /></IconButton>
              <IconButton aria-label="Tile"><GridIcon /></IconButton>
              <IconButton aria-label="Rows"><RowsIcon /></IconButton>
              <IconButton aria-label="Columns"><ColsIcon /></IconButton>
              <IconButton aria-label="Show tabs"><Draw><path d="M3 12L8 4L13 12Z" fill="#e8e8e8" /></Draw></IconButton>
            </LayoutButtons>
            <DocTab $w={72}>My Home</DocTab>
            <DocTab $w={153} $active>Pompa Minyak A...iam<Draw w={10} h={10}><path d="M1 1L9 9M9 1L1 9" stroke="#444" strokeWidth="2" /></Draw></DocTab>
          </DocTabs>
        </DocArea>
      </Workspace>
      <StatusBar>Ready</StatusBar>
    </Shell>
  );
}
